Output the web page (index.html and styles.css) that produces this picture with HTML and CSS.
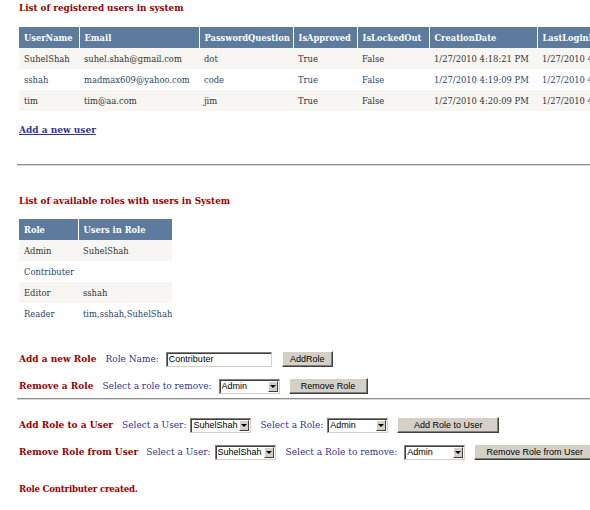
FILE: index.html
```html
<!DOCTYPE html>
<html>
<head>
<meta charset="utf-8">
<link rel="stylesheet" href="styles.css">
</head>
<body>
<div class="page">
  <div class="title">List of registered users in system</div>
  <table class="grid users">
    <colgroup>
      <col style="width:60px"><col style="width:120px"><col style="width:94px"><col style="width:64px"><col style="width:72px"><col style="width:108px"><col style="width:120px">
    </colgroup>
    <tr class="head"><th>UserName</th><th>Email</th><th>PasswordQuestion</th><th>IsApproved</th><th>IsLockedOut</th><th>CreationDate</th><th>LastLoginDate</th></tr>
    <tr class="row"><td>SuhelShah</td><td>suhel.shah@gmail.com</td><td>dot</td><td>True</td><td>False</td><td>1/27/2010 4:18:21 PM</td><td>1/27/2010 4:18:21 PM</td></tr>
    <tr class="alt"><td>sshah</td><td>madmax609@yahoo.com</td><td>code</td><td>True</td><td>False</td><td>1/27/2010 4:19:09 PM</td><td>1/27/2010 4:19:09 PM</td></tr>
    <tr class="row"><td>tim</td><td>tim@aa.com</td><td>jim</td><td>True</td><td>False</td><td>1/27/2010 4:20:09 PM</td><td>1/27/2010 4:20:09 PM</td></tr>
  </table>
  <div class="linkline"><a href="#" class="addlink">Add a new user</a></div>
  <hr class="rule rule1">
  <div class="title title2">List of available roles with users in System</div>
  <table class="grid roles">
    <colgroup><col style="width:59px"><col style="width:94px"></colgroup>
    <tr class="head"><th>Role</th><th>Users in Role</th></tr>
    <tr class="row"><td>Admin</td><td>SuhelShah</td></tr>
    <tr class="alt"><td>Contributer</td><td></td></tr>
    <tr class="row"><td>Editor</td><td>sshah</td></tr>
    <tr class="alt"><td>Reader</td><td>tim,sshah,SuhelShah</td></tr>
  </table>

  <div class="formrow r-add">
    <span class="lbl">Add a new Role</span>
    <span class="cap">Role Name:</span>
    <input class="txt" type="text" value="Contributer">
    <button class="btn b-addrole">AddRole</button>
  </div>
  <div class="formrow r-remove">
    <span class="lbl">Remove a Role</span>
    <span class="cap">Select a role to remove:</span>
    <span class="sel s-role"><select><option>Admin</option></select><span class="arrow"></span></span>
    <button class="btn b-remrole">Remove Role</button>
  </div>
  <hr class="rule rule2">
  <div class="formrow r-addtouser">
    <span class="lbl">Add Role to a User</span>
    <span class="cap">Select a User:</span>
    <span class="sel s-user"><select><option>SuhelShah</option></select><span class="arrow"></span></span>
    <span class="cap">Select a Role:</span>
    <span class="sel s-role"><select><option>Admin</option></select><span class="arrow"></span></span>
    <button class="btn b-addtouser">Add Role to User</button>
  </div>
  <div class="formrow r-remfromuser">
    <span class="lbl">Remove Role from User</span>
    <span class="cap">Select a User:</span>
    <span class="sel s-user"><select><option>SuhelShah</option></select><span class="arrow"></span></span>
    <span class="cap cap-wide">Select a Role to remove:</span>
    <span class="sel s-role"><select><option>Admin</option></select><span class="arrow"></span></span>
    <button class="btn b-remfromuser">Remove Role from User</button>
  </div>
  <div class="title msg">Role Contributer created.</div>
</div>
</body>
</html>
```

FILE: styles.css
```css
html, body {
  margin: 0;
  padding: 0;
  background: #ffffff;
  overflow: hidden;
}
body {
  font-family: "DejaVu Serif", serif;
  font-size: 8.4px;
  color: #333333;
}
.page {
  padding-left: 19px;
  width: 700px;
}
.title {
  font-weight: bold;
  color: #990000;
  height: 16px;
  line-height: 16px;
  font-size: 8.8px;
  white-space: nowrap;
}
.grid {
  border-collapse: collapse;
  table-layout: fixed;
  margin-top: 11px;
  font-size: 8.4px;
}
.grid th, .grid td {
  height: 21px;
  padding: 0 0 0 5px;
  text-align: left;
  white-space: nowrap;
  overflow: hidden;
  box-sizing: border-box;
}
.grid .head th {
  background: #5d7b9d;
  color: #ffffff;
  font-weight: bold;
  font-size: 8.3px;
  border-left: 1px solid #ffffff;
}
.grid .head th:first-child {
  border-left: none;
}
.grid .row td {
  background: #f7f6f3;
  color: #333333;
}
.grid .alt td {
  background: #ffffff;
  color: #284775;
}
.linkline {
  margin-top: 11px;
  height: 16px;
  line-height: 16px;
  font-size: 9px;
}
.addlink {
  color: #333399;
  font-weight: bold;
  text-decoration: underline;
}
.rule {
  margin: 0 0 0 -2px;
  border: none;
  border-top: 1px solid #8c8c8c;
  border-bottom: 1px solid #d8d8d8;
  height: 0;
  width: 720px;
}
.rule1 {
  margin-top: 26px;
}
.title2 {
  margin-top: 27px;
}
.roles {
  margin-top: 10px;
}
.formrow {
  display: flex;
  align-items: center;
  height: 18px;
  white-space: nowrap;
  font-size: 9px;
}
.r-add { margin-top: 26px; }
.r-remove { margin-top: 9px; }
.rule2 { margin-top: 3px; }
.r-addtouser { margin-top: 16px; }
.r-remfromuser { margin-top: 9px; }
.lbl {
  color: #990000;
  font-weight: bold;
  font-size: 9px;
  margin-right: 9px;
}
.cap {
  color: #333399;
  margin-right: 7px;
}
.r-addtouser .cap,
.r-remfromuser .cap {
  margin-right: 4px;
}
.r-remfromuser .cap-wide {
  margin-left: 1px;
  margin-right: 7px;
}
.r-remfromuser .lbl {
  margin-right: 8px;
}
.txt {
  box-sizing: border-box;
  width: 106px;
  height: 15px;
  padding: 0 2px;
  margin: 0 10px 0 0;
  font-family: "Liberation Sans", Arial, sans-serif;
  font-size: 9px;
  color: #000;
  background: #fff;
  border-top: 1px solid #808080;
  border-left: 1px solid #808080;
  border-right: 1px solid #d4d0c8;
  border-bottom: 1px solid #d4d0c8;
  box-shadow: inset 1px 1px 0 #404040;
  outline: none;
}
.btn {
  box-sizing: border-box;
  height: 16px;
  padding: 0;
  margin: 0;
  font-family: "Liberation Sans", Arial, sans-serif;
  font-size: 9px;
  color: #000;
  background: #d4d0c8;
  border-top: 1px solid #ffffff;
  border-left: 1px solid #ffffff;
  border-right: 1px solid #404040;
  border-bottom: 1px solid #404040;
  box-shadow: inset -1px -1px 0 #808080;
  border-radius: 0;
}
.b-addrole { width: 51px; }
.b-remrole { width: 79px; }
.b-addtouser { width: 102px; }
.b-remfromuser { width: 121px; }
.sel {
  position: relative;
  display: inline-block;
  height: 15px;
  margin-right: 9px;
}
.sel select {
  appearance: none;
  -webkit-appearance: none;
  box-sizing: border-box;
  height: 15px;
  width: 100%;
  margin: 0;
  padding: 0 0 0 2px;
  font-family: "Liberation Sans", Arial, sans-serif;
  font-size: 9px;
  color: #000;
  background: #fff;
  border-top: 1px solid #808080;
  border-left: 1px solid #808080;
  border-right: 1px solid #d4d0c8;
  border-bottom: 1px solid #d4d0c8;
  box-shadow: inset 1px 1px 0 #404040;
  border-radius: 0;
  outline: none;
}
.s-role { width: 61px; }
.s-user { width: 61px; }
.arrow {
  position: absolute;
  right: 2px;
  top: 2px;
  width: 10px;
  height: 11px;
  box-sizing: border-box;
  background: #d4d0c8;
  border-top: 1px solid #ffffff;
  border-left: 1px solid #ffffff;
  border-right: 1px solid #404040;
  border-bottom: 1px solid #404040;
}
.arrow::after {
  content: "";
  position: absolute;
  left: 1px;
  top: 3px;
  border-left: 3px solid transparent;
  border-right: 3px solid transparent;
  border-top: 3px solid #000;
}
.msg {
  margin-top: 20px;
  font-size: 8.6px;
  letter-spacing: -0.2px;
}
```
